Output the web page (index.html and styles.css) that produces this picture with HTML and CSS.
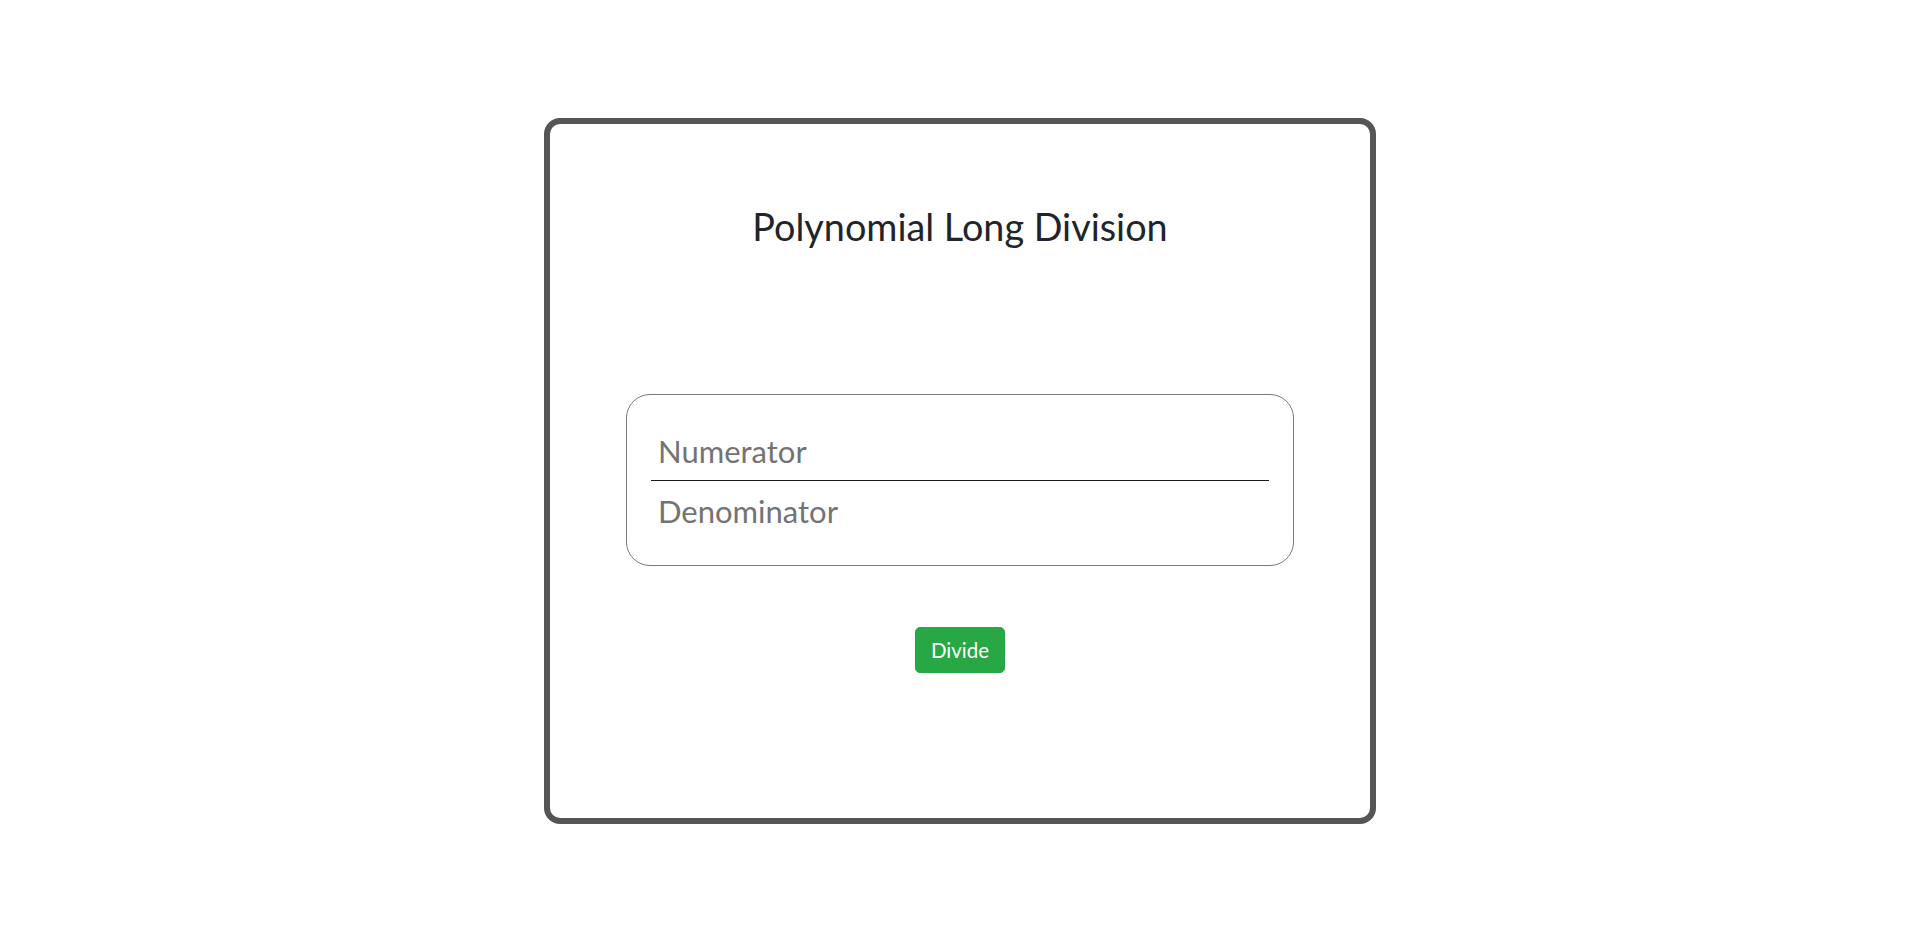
FILE: index.html
```html
<!DOCTYPE html>
<html lang="en">
<head>
<meta charset="utf-8">
<title>Polynomial Long Division</title>
<link rel="stylesheet" href="styles.css">
</head>
<body>
<main class="page">
  <section class="card">
    <h1 class="title">Polynomial Long Division</h1>
    <form class="form">
      <div class="fields">
        <input class="field field-top" type="text" placeholder="Numerator">
        <input class="field" type="text" placeholder="Denominator">
      </div>
      <button class="btn" type="button">Divide</button>
    </form>
  </section>
</main>
</body>
</html>
```
FILE: styles.css
```css
html, body {
  margin: 0;
  padding: 0;
  background: #ffffff;
}
body {
  font-family: "Lato", "Open Sans", "Noto Sans", sans-serif;
  color: #212529;
}
.page {
  display: flex;
  justify-content: center;
  padding-top: 118px;
}
.card {
  box-sizing: border-box;
  width: 832px;
  height: 706px;
  border: 6px solid #555555;
  border-radius: 16px;
  display: flex;
  flex-direction: column;
  align-items: center;
}
.title {
  margin: 80px 0 0;
  font-size: 37.8px;
  font-weight: 400;
  line-height: 46px;
  color: #212529;
}
.form {
  margin-top: 144px;
  display: flex;
  flex-direction: column;
  align-items: center;
}
.fields {
  box-sizing: border-box;
  width: 668px;
  height: 172px;
  padding: 24px;
  border: 1px solid #7a7a7a;
  border-radius: 24px;
  display: flex;
  flex-direction: column;
}
.field {
  box-sizing: border-box;
  height: 61px;
  width: 100%;
  border: none;
  outline: none;
  padding: 0 7px;
  font-family: inherit;
  font-size: 31px;
  color: #495057;
  background: transparent;
}
.field::placeholder {
  color: #737373;
  opacity: 1;
}
.field-top {
  border-bottom: 1px solid #1a1a1a;
  height: 62px;
  padding-top: 4px;
}
.btn {
  margin-top: 61px;
  height: 46px;
  padding: 0 15px;
  border: 1px solid #28a745;
  border-radius: 5px;
  background: #28a745;
  color: #ffffff;
  font-family: inherit;
  font-size: 20.5px;
  line-height: 1;
  cursor: pointer;
}
```
